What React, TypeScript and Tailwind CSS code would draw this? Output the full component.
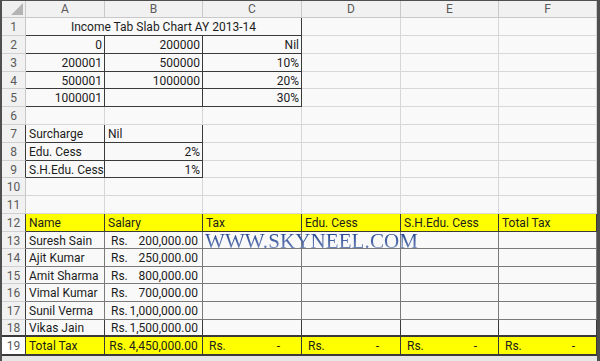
import React from "react";

const cols = ["A", "B", "C", "D", "E", "F"];
const rowH = [18, 18, 18, 17, 18, 18, 18, 18, 17, 18, 18, 18, 17, 18, 17, 18, 18, 17, 19];

const DARK = "border-[#3a3a3a]";

type Cell = { text?: React.ReactNode; align?: "left" | "right" | "center"; acct?: [string, string] };

const names = ["Suresh Sain", "Ajit Kumar", "Amit Sharma", "Vimal Kumar", "Sunil Verma", "Vikas Jain"];
const salaries = ["200,000.00", "250,000.00", "800,000.00", "700,000.00", "1,000,000.00", "1,500,000.00"];

function cellAt(r: number, c: number): Cell {
  if (r === 2) return [{ text: "0", align: "right" }, { text: "200000", align: "right" }, { text: "Nil", align: "right" }][c - 1] ?? {};
  if (r === 3) return [{ text: "200001", align: "right" }, { text: "500000", align: "right" }, { text: "10%", align: "right" }][c - 1] ?? {};
  if (r === 4) return [{ text: "500001", align: "right" }, { text: "1000000", align: "right" }, { text: "20%", align: "right" }][c - 1] ?? {};
  if (r === 5) return [{ text: "1000001", align: "right" }, {}, { text: "30%", align: "right" }][c - 1] ?? {};
  if (r === 7) return [{ text: "Surcharge" }, { text: "Nil" }][c - 1] ?? {};
  if (r === 8) return [{ text: "Edu. Cess" }, { text: "2%", align: "right" }][c - 1] ?? {};
  if (r === 9) return [{ text: "S.H.Edu. Cess" }, { text: "1%", align: "right" }][c - 1] ?? {};
  if (r === 12) return { text: ["Name", "Salary", "Tax", "Edu. Cess", "S.H.Edu. Cess", "Total Tax"][c - 1] };
  if (r >= 13 && r <= 18) {
    if (c === 1) return { text: names[r - 13] };
    if (c === 2) return { acct: ["Rs.", salaries[r - 13]] };
    return {};
  }
  if (r === 19) {
    if (c === 1) return { text: "Total Tax" };
    if (c === 2) return { text: "Rs. 4,450,000.00", align: "center" };
    return { acct: ["Rs.", "-"] };
  }
  return {};
}

function rightDark(r: number, c: number) {
  if (r === 1) return c === 3;
  if (r >= 2 && r <= 5) return c >= 1 && c <= 3;
  if (r >= 7 && r <= 9) return c >= 0 && c <= 2;
  if (r >= 12) return true;
  return false;
}

function bottomClass(r: number, c: number) {
  if (r >= 1 && r <= 5 && c >= 1 && c <= 3) return DARK;
  if (r === 6 && (c === 1 || c === 2)) return DARK;
  if (r >= 7 && r <= 9 && (c === 1 || c === 2)) return DARK;
  if (r === 11 && c >= 1) return DARK;
  if (r === 12 && c >= 1) return DARK;
  if (r >= 13 && r <= 17 && c >= 1) return "border-[#7a7a7a]";
  if (r === 18) return `${DARK} border-b-2`;
  if (r === 19) return `${DARK} border-b-2`;
  return c === 0 ? "border-[#c8c8c8]" : "border-[#d7d7d7]";
}

function DataCell({ r, c }: { r: number; c: number }) {
  const cell = cellAt(r, c);
  const yellow = r === 12 || r === 19;
  const rc = rightDark(r, c) ? DARK : "border-[#d7d7d7]";
  const bc = bottomClass(r, c);
  const align =
    cell.align === "right" ? "justify-end pr-[2px]" : cell.align === "center" ? "justify-center" : "justify-start pl-[3px]";
  return (
    <div
      className={`flex items-center pt-[1px] border-r border-b ${rc} ${bc} ${
        yellow ? "bg-[#ffff00]" : "bg-[#f9f9f9]"
      } ${align} overflow-visible whitespace-nowrap`}
    >
      {cell.acct ? (
        <div className={`flex w-full justify-between pl-[3px] ${c === 2 ? "pr-[4px]" : "pr-[21px]"}`}>
          <span>{cell.acct[0]}</span>
          <span>{cell.acct[1]}</span>
        </div>
      ) : (
        cell.text
      )}
    </div>
  );
}

function Corner() {
  return (
    <div className="relative border-r border-b border-[#c8c8c8] bg-[#efefef]">
      <svg className="absolute right-[2px] bottom-[2px]" width="12" height="12" viewBox="0 0 12 12">
        <polygon points="12,0 12,12 0,12" fill="#b4b4b4" />
      </svg>
    </div>
  );
}

export default function App() {
  const template = `24px 79px 98px 99px 99px 98px 98px`;
  const rows = `17px ${rowH.map((h) => `${h}px`).join(" ")}`;
  return (
    <div
      className="w-[600px] h-[361px] bg-[#e6e6e6] border-l-2 border-t border-r-[3px] border-[#4f4f4f] overflow-hidden text-[12px] leading-none text-[#1c1c1c]"
      style={{ fontFamily: 'Roboto, "Liberation Sans", sans-serif' }}
    >
      <div className="relative grid" style={{ gridTemplateColumns: template, gridTemplateRows: rows }}>
        <Corner />
        {cols.map((c) => (
          <div
            key={c}
            className="flex items-center justify-center border-r border-b border-[#c8c8c8] bg-[#f1f1f1] text-[#5a5a5a]"
          >
            {c}
          </div>
        ))}
        {rowH.map((_, i) => {
          const r = i + 1;
          return (
            <React.Fragment key={r}>
              <div
                className={`flex items-center justify-center pt-[1px] border-r border-b text-[#5a5a5a] ${
                  r === 19 ? "bg-white border-b-2 border-[#3a3a3a]" : "bg-[#f1f1f1]"
                } ${rightDark(r, 0) ? DARK : "border-r-[#c8c8c8]"} ${
                  r === 18 ? "border-b-2 border-b-[#3a3a3a]" : r === 19 ? "" : "border-b-[#d0d0d0]"
                }`}
              >
                {r}
              </div>
              {r === 1 ? (
                <>
                  <div className="col-span-3 flex items-center pt-[1px] justify-center border-r border-b border-[#3a3a3a] bg-[#f9f9f9]">
                    Income Tab Slab Chart AY 2013-14
                  </div>
                  {[4, 5, 6].map((c) => (
                    <DataCell key={c} r={r} c={c} />
                  ))}
                </>
              ) : (
                [1, 2, 3, 4, 5, 6].map((c) => <DataCell key={c} r={r} c={c} />)
              )}
            </React.Fragment>
          );
        })}
        <div
          className="absolute left-[203px] top-[233px] text-[21px] leading-[15px] tracking-[0.1px] pointer-events-none bg-gradient-to-b from-[#284892] to-[#7388ba] bg-clip-text text-transparent"
          style={{ fontFamily: '"Liberation Serif", "Times New Roman", serif' }}
        >
          WWW.SKYNEEL.COM
        </div>
      </div>
    </div>
  );
}
